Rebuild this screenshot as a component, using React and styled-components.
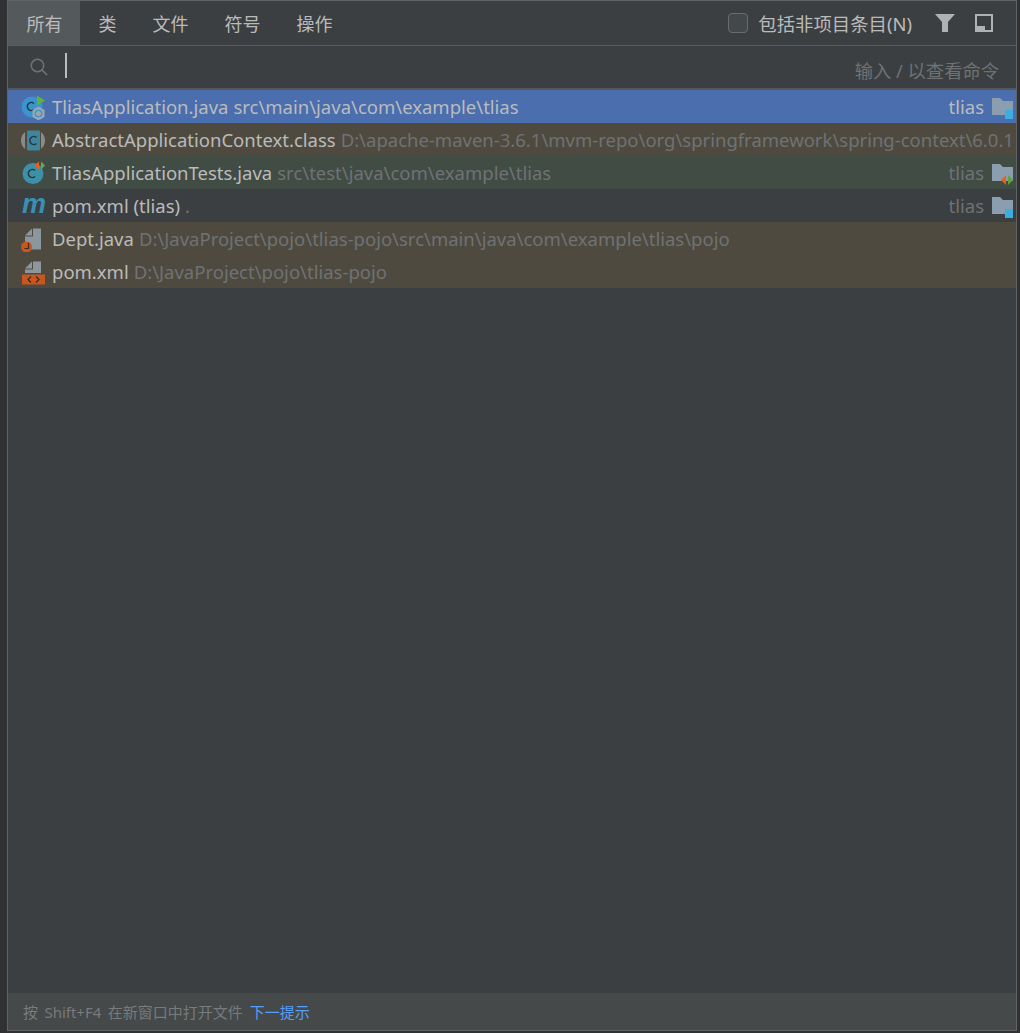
import React from "react";
import styled, { createGlobalStyle } from "styled-components";

const GlobalStyle = createGlobalStyle`
  html, body {
    margin: 0;
    padding: 0;
    background: #2f3133;
  }
`;

const fontStack = `"Noto Sans", "Noto Sans CJK SC", sans-serif`;

const tabs = ["所有", "类", "文件", "符号", "操作"];

const App = () => {
  return (
    <Page>
      <GlobalStyle />
      <Popup>
        <TabBar>
          {tabs.map((tab, i) => (
            <Tab key={tab} active={i === 0}>
              {tab}
            </Tab>
          ))}
          <TabTools>
            <CheckBox />
            <CheckLabel>包括非项目条目(N)</CheckLabel>
            <FilterIcon />
            <PinIcon />
          </TabTools>
        </TabBar>
        <SearchBar>
          <SearchIcon />
          <Caret />
          <SearchHint>输入 / 以查看命令</SearchHint>
        </SearchBar>
        <List>
          <Row bg="#4b6eaf">
            <RowIcon><MainClassIcon /></RowIcon>
            <Name>TliasApplication.java</Name>
            <Path color="#bbbbbb">src\main\java\com\example\tlias</Path>
            <Module color="#bbbbbb">tlias</Module>
            <FolderIcon badge="source" />
          </Row>
          <Row bg="#4e4a3f">
            <RowIcon><LibClassIcon /></RowIcon>
            <Name>AbstractApplicationContext.class</Name>
            <Path>D:\apache-maven-3.6.1\mvm-repo\org\springframework\spring-context\6.0.1</Path>
          </Row>
          <Row bg="#414c44">
            <RowIcon><TestClassIcon /></RowIcon>
            <Name>TliasApplicationTests.java</Name>
            <Path>src\test\java\com\example\tlias</Path>
            <Module>tlias</Module>
            <FolderIcon badge="test" />
          </Row>
          <Row>
            <RowIcon><MavenIcon>m</MavenIcon></RowIcon>
            <Name>pom.xml (tlias)</Name>
            <Path>.</Path>
            <Module>tlias</Module>
            <FolderIcon badge="source" />
          </Row>
          <Row bg="#4e4a3f">
            <RowIcon><JavaFileIcon /></RowIcon>
            <Name>Dept.java</Name>
            <Path>D:\JavaProject\pojo\tlias-pojo\src\main\java\com\example\tlias\pojo</Path>
          </Row>
          <Row bg="#4e4a3f">
            <RowIcon><XmlFileIcon /></RowIcon>
            <Name>pom.xml</Name>
            <Path>D:\JavaProject\pojo\tlias-pojo</Path>
          </Row>
        </List>
        <Footer>
          按 Shift+F4 在新窗口中打开文件<TipLink>下一提示</TipLink>
        </Footer>
      </Popup>
    </Page>
  );
};

const SearchIcon = () => (
  <svg width="20" height="20" viewBox="0 0 20 20" fill="none">
    <circle cx="8.5" cy="8.5" r="6.2" stroke="#6e7376" strokeWidth="1.5" />
    <path d="M13 13l5 5" stroke="#6e7376" strokeWidth="1.7" />
  </svg>
);

const FilterIcon = () => (
  <svg width="20" height="18" viewBox="0 0 20 18" style={{ marginLeft: 23 }}>
    <path d="M0 0h20l-7 8v10h-6v-10z" fill="#afb1b3" />
  </svg>
);

const PinIcon = () => (
  <svg width="18" height="18" viewBox="0 0 18 18" style={{ marginLeft: 20 }}>
    <path d="M0 0h18v18h-18zM2 2v10h8v4h6v-14z" fill="#afb1b3" fillRule="evenodd" />
    <path d="M0 12h10v6h-10z" fill="#afb1b3" />
  </svg>
);

const FolderIcon = ({ badge }) => (
  <svg width="24" height="24" viewBox="0 0 24 24" style={{ marginLeft: 7, marginRight: 1, flexShrink: 0 }}>
    <path d="M1 3h8l3 3h10v14h-21z" fill="#8b9eb0" />
    {badge === "source" && <rect x="14" y="15" width="8" height="9" fill="#3aaee0" />}
    {badge === "test" && (
      <>
        <path d="M15 14v10l-5-5z" fill="#e8601c" />
        <path d="M17 14v10l5-5z" fill="#5aa63a" />
      </>
    )}
  </svg>
);

const MainClassIcon = () => (
  <svg width="26" height="26" viewBox="0 0 26 26">
    <circle cx="11" cy="13" r="10.500" fill="#3a94d0" />
    <path d="M13 9.500a4 4 0 1 0 0 6" fill="none" stroke="#27353d" strokeWidth="1.500" />
    <path d="M16 1.500l8 5-8 5z" fill="#5eb43a" />
    <path d="M17.500 12.500l6 3.500v7l-6 3.500-6-3.500v-7z" fill="#9aa7b0" />
    <circle cx="17.500" cy="19.500" r="3.200" fill="none" stroke="#3a94d0" strokeWidth="1.300" />
  </svg>
);

const LibClassIcon = () => (
  <svg width="26" height="26" viewBox="0 0 26 26">
    <path d="M4 5a11 11 0 0 0 0 17z" fill="#8a8a88" />
    <path d="M20 5a11 11 0 0 1 0 17z" fill="#8a8a88" />
    <rect x="6" y="3.500" width="13" height="20" rx="1" fill="#3e859f" />
    <path d="M15.500 10.500a4 4 0 1 0 0 6" fill="none" stroke="#27353d" strokeWidth="1.500" />
  </svg>
);

const TestClassIcon = () => (
  <svg width="26" height="26" viewBox="0 0 26 26">
    <circle cx="12" cy="13.500" r="10.500" fill="#3e8fa8" />
    <path d="M14 10.500a4 4 0 1 0 0 6" fill="none" stroke="#27353d" strokeWidth="1.500" />
    <path d="M18 1.500v8l-5-4z" fill="#e8601c" />
    <path d="M20 1.500v8l4-4z" fill="#5eb43a" />
  </svg>
);

const JavaFileIcon = () => (
  <svg width="26" height="26" viewBox="0 0 26 26">
    <path d="M4 9.500l7-7v7z" fill="#8a979c" />
    <path d="M12 2.500h8v21h-16v-13h8z" fill="#8a979c" />
    <circle cx="5.500" cy="21" r="5.500" fill="#c7561f" />
    <path d="M7.500 17v5.500h-4" fill="none" stroke="#3a2a20" strokeWidth="1.200" />
  </svg>
);

const XmlFileIcon = () => (
  <svg width="26" height="26" viewBox="0 0 26 26">
    <path d="M4 9.500l7-7v7z" fill="#8a979c" />
    <path d="M12 2.500h8v11.500h-16v-3.500h8z" fill="#8a979c" />
    <rect x="1" y="15.500" width="23" height="10" fill="#c7561f" />
    <path d="M10 17.500l-3 3 3 3M15 17.500l3 3-3 3" fill="none" stroke="#3b2a20" strokeWidth="1.200" />
  </svg>
);

const Caret = () => <CaretLine />;

const Page = styled.div`
  width: 1020px;
  height: 1033px;
  padding: 0 3px 2px 7px;
  box-sizing: border-box;
  background: #2f3133;
  overflow: hidden;
  font-family: ${fontStack};
`;

const Popup = styled.div`
  height: 100%;
  box-sizing: border-box;
  display: flex;
  flex-direction: column;
  background: #3c3f41;
  border: 1px solid #616365;
  color: #bbbbbb;
`;

const TabBar = styled.div`
  height: 45px;
  flex-shrink: 0;
  box-sizing: border-box;
  display: flex;
  align-items: stretch;
  border-bottom: 1px solid #5a5d5f;
`;

const Tab = styled.div`
  padding: 0 17.5px 0 18.5px;
  display: flex;
  align-items: center;
  font-size: 18px;
  color: #bbbbbb;
  background: ${(props) => (props.active ? "#54595c" : "transparent")};
`;

const TabTools = styled.div`
  margin-left: auto;
  padding-right: 23px;
  display: flex;
  align-items: center;
`;

const CheckBox = styled.div`
  width: 20px;
  height: 20px;
  box-sizing: border-box;
  border: 1px solid #6b6b6b;
  border-radius: 4px;
  background: #43494a;
`;

const CheckLabel = styled.span`
  margin-left: 10px;
  font-size: 18.4px;
  color: #bbbbbb;
`;

const SearchBar = styled.div`
  height: 44px;
  flex-shrink: 0;
  box-sizing: border-box;
  padding-left: 21px;
  display: flex;
  align-items: center;
  border-bottom: 2px solid #555759;
`;

const CaretLine = styled.div`
  width: 2px;
  height: 25px;
  margin: -4px 0 0 16px;
  background: #bbbbbb;
`;

const SearchHint = styled.span`
  margin-left: auto;
  padding: 6px 17px 0 0;
  font-size: 18.3px;
  color: #6f7274;
`;

const List = styled.div`
  flex: 1;
  min-height: 0;
`;

const Row = styled.div`
  height: 33px;
  box-sizing: border-box;
  padding-left: 13px;
  display: flex;
  align-items: center;
  font-size: 18.5px;
  white-space: nowrap;
  overflow: hidden;
  background: ${(props) => props.bg || "transparent"};
`;

const RowIcon = styled.div`
  width: 26px;
  height: 26px;
  margin-right: 5px;
  flex-shrink: 0;
  display: flex;
  align-items: center;
`;

const Name = styled.span`
  color: #bbbbbb;
`;

const Path = styled.span`
  margin-left: 5px;
  color: ${(props) => props.color || "#6f7274"};
`;

const Module = styled.span`
  margin-left: auto;
  color: ${(props) => props.color || "#6f7274"};
`;

const MavenIcon = styled.span`
  font: italic bold 27px/26px "Liberation Sans", sans-serif;
  color: #3a8fb5;
  margin: -4px 0 0 1px;
`;

const Footer = styled.div`
  height: 37px;
  flex-shrink: 0;
  box-sizing: border-box;
  padding-left: 15px;
  display: flex;
  align-items: center;
  font-size: 15px;
  word-spacing: 2.5px;
  color: #787a7c;
  background: #45494a;
`;

const TipLink = styled.span`
  margin-left: 7px;
  color: #589df6;
`;

export default App;
